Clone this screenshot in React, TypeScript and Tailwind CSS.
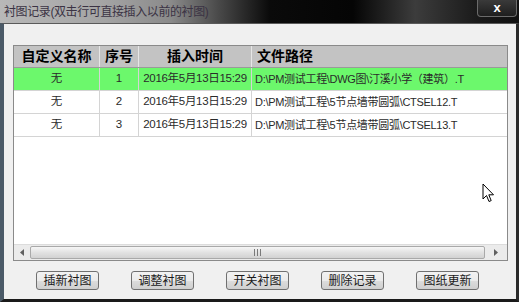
import React from 'react';

const rows = [
  { name: '无', no: '1', time: '2016年5月13日15:29', path: 'D:\\PM测试工程\\DWG图\\汀溪小学（建筑）.T', active: true },
  { name: '无', no: '2', time: '2016年5月13日15:29', path: 'D:\\PM测试工程\\5节点墙带圆弧\\CTSEL12.T', active: false },
  { name: '无', no: '3', time: '2016年5月13日15:29', path: 'D:\\PM测试工程\\5节点墙带圆弧\\CTSEL13.T', active: false },
];

const buttons = ['插新衬图', '调整衬图', '开关衬图', '删除记录', '图纸更新'];

const font = { fontFamily: '"Liberation Sans", "Noto Sans CJK SC", sans-serif' };

export default function App() {
  return (
    <div
      className="relative w-[519px] h-[302px] overflow-hidden bg-[#1a1a1a] flex flex-col"
      style={font}
    >
      {/* Title bar */}
      <div className="relative h-[23px] shrink-0 flex items-center pl-[4px] bg-[linear-gradient(to_right,#b8b8b8_0%,#a4a4a4_20%,#8a8a8a_33%,#4a4a4a_42%,#0a0a0a_52%,#050505_68%,#3c3c3c_80%,#1a1a1a_92%,#101010_100%)]">
        <span className="text-[12px] text-[#3b3344] leading-none tracking-[-0.4px]">
          衬图记录(双击行可直接插入以前的衬图)
        </span>
        <div className="absolute right-[2px] top-0 w-[40px] h-[17px] rounded-b-[4px] border border-t-0 border-[#6b6b6b] bg-[linear-gradient(to_bottom,#3a3a3a,#1e1e1e)] flex items-center justify-center">
          <span className="text-white text-[13px] font-bold leading-none -mt-[2px]">x</span>
        </div>
      </div>

      {/* Body */}
      <div className="flex-1 flex flex-col bg-[#f0f0f0] border-l-[4px] border-l-[#4b5a68] border-r-[3px] border-r-[#2a2a2a] border-b-[3px] border-b-[#1a1a1a] border-t border-t-[#5a5a5a] pt-[21px] pl-[9px] pr-[8px]">
        {/* List view */}
        <div className="h-[216px] border border-[#8a8a8a] bg-white flex flex-col">
          {/* Header */}
          <div className="flex h-[22px] bg-[#c3c3c3] border-b border-[#9a9a9a] text-[14px] font-bold text-black">
            <div className="w-[86px] flex items-center justify-center border-r border-[#e6e6e6]">自定义名称</div>
            <div className="w-[39px] flex items-center justify-center border-r border-[#e6e6e6]">序号</div>
            <div className="w-[113px] flex items-center justify-center border-r border-[#e6e6e6]">插入时间</div>
            <div className="flex-1 flex items-center pl-[5px]">文件路径</div>
          </div>
          {/* Rows */}
          {rows.map((r) => (
            <div
              key={r.no}
              className={`flex h-[23px] text-[11.5px] text-[#2a2a2a] border-b border-[#d4d4d4] ${r.active ? 'bg-[#6cf86c]' : 'bg-white'}`}
            >
              <div className="w-[86px] flex items-center justify-center border-r border-[#d4d4d4]">{r.name}</div>
              <div className="w-[39px] flex items-center justify-center border-r border-[#d4d4d4]">{r.no}</div>
              <div className="w-[113px] flex items-center justify-center border-r border-[#d4d4d4] tracking-[-0.3px]">{r.time}</div>
              <div className="flex-1 flex items-center pl-[3px] text-[11px] tracking-[-0.3px] whitespace-nowrap overflow-hidden">{r.path}</div>
            </div>
          ))}
          <div className="flex-1" />
          {/* Horizontal scrollbar */}
          <div className="h-[16px] flex bg-[#ebebeb] border-t border-[#dcdcdc]">
            <div className="w-[16px] flex items-center justify-center">
              <svg width="4" height="7" viewBox="0 0 4 7">
                <path d="M4 0 L0 3.5 L4 7 Z" fill="#606060" />
              </svg>
            </div>
            <div className="flex-1 my-[1px] rounded-[2px] border border-[#a9a9a9] bg-[linear-gradient(to_bottom,#f6f6f6,#e2e2e2_50%,#d2d2d2)] flex items-center justify-center">
              <div className="flex gap-[2px]">
                <div className="w-[1px] h-[7px] bg-[#7a7a7a]" />
                <div className="w-[1px] h-[7px] bg-[#7a7a7a]" />
                <div className="w-[1px] h-[7px] bg-[#7a7a7a]" />
              </div>
            </div>
            <div className="w-[22px] flex items-center justify-center">
              <svg width="4" height="7" viewBox="0 0 4 7">
                <path d="M0 0 L4 3.5 L0 7 Z" fill="#606060" />
              </svg>
            </div>
          </div>
        </div>

        {/* Buttons */}
        <div className="flex mt-[10px] pl-[23px] gap-[32px]">
          {buttons.map((b) => (
            <button
              key={b}
              className="w-[63px] h-[19px] rounded-[3px] border border-[#707070] bg-[linear-gradient(to_bottom,#f2f2f2,#ebebeb_50%,#dddddd_51%,#cfcfcf)] text-[12px] text-[#1a1a1a] leading-none flex items-center justify-center"
            >
              {b}
            </button>
          ))}
        </div>
      </div>

      {/* Mouse cursor */}
      <svg className="absolute left-[482px] top-[183px]" width="13" height="20" viewBox="0 0 13 20">
        <path
          d="M1 1 L1 16 L4.5 12.5 L7 18.5 L9.2 17.6 L6.8 11.8 L11.5 11.8 Z"
          fill="#ffffff"
          stroke="#000000"
          strokeWidth="1"
          strokeLinejoin="round"
        />
      </svg>
    </div>
  );
}
